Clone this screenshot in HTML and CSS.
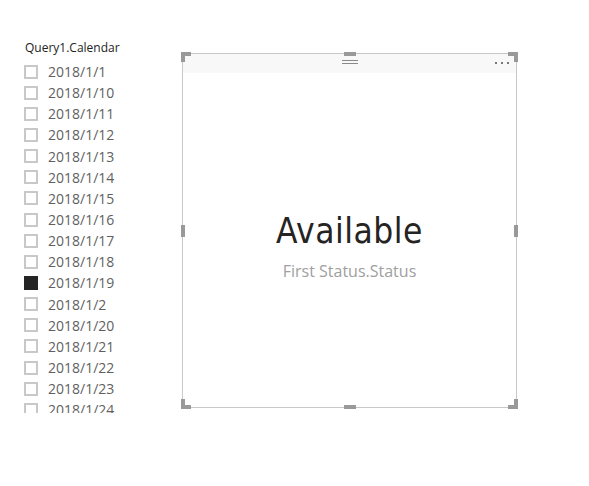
FILE: index.html
```html
<!DOCTYPE html>
<html>
<head>
<meta charset="utf-8">
<link rel="stylesheet" href="styles.css">
</head>
<body>
<div class="canvas">
  <div class="slicer">
    <div class="slicer-title">Query1.Calendar</div>
    <ul class="items">
      <li><span class="box"></span>2018/1/1</li>
      <li><span class="box"></span>2018/1/10</li>
      <li><span class="box"></span>2018/1/11</li>
      <li><span class="box"></span>2018/1/12</li>
      <li><span class="box"></span>2018/1/13</li>
      <li><span class="box"></span>2018/1/14</li>
      <li><span class="box"></span>2018/1/15</li>
      <li><span class="box"></span>2018/1/16</li>
      <li><span class="box"></span>2018/1/17</li>
      <li><span class="box"></span>2018/1/18</li>
      <li><span class="box checked"></span>2018/1/19</li>
      <li><span class="box"></span>2018/1/2</li>
      <li><span class="box"></span>2018/1/20</li>
      <li><span class="box"></span>2018/1/21</li>
      <li><span class="box"></span>2018/1/22</li>
      <li><span class="box"></span>2018/1/23</li>
      <li><span class="box"></span>2018/1/24</li>
    </ul>
  </div>
  <div class="card">
    <div class="card-head">
      <span class="grip"><i></i><i></i></span>
      <span class="more"><i></i><i></i><i></i></span>
    </div>
    <div class="card-body">
      <div class="value">Available</div>
      <div class="label">First Status.Status</div>
    </div>
    <span class="h tl"></span>
    <span class="h tr"></span>
    <span class="h bl"></span>
    <span class="h br"></span>
    <span class="m top"></span>
    <span class="m bottom"></span>
    <span class="m left"></span>
    <span class="m right"></span>
  </div>
</div>
</body>
</html>
```
FILE: styles.css
```css
html, body {
  margin: 0;
  padding: 0;
  background: #ffffff;
}
body {
  width: 589px;
  height: 486px;
  overflow: hidden;
  font-family: "Open Sans", "Liberation Sans", sans-serif;
}
.canvas {
  display: flex;
  align-items: flex-start;
  padding: 0 0 0 24px;
}
.slicer {
  width: 158px;
  padding-top: 39px;
  height: 374px;
  overflow: hidden;
  flex: none;
}
.slicer-title {
  font-size: 12px;
  line-height: 18px;
  color: #222222;
  margin-bottom: 4px;
  padding-left: 1px;
}
.items {
  list-style: none;
  margin: 0;
  padding: 0;
}
.items li {
  display: flex;
  align-items: center;
  height: 21.15px;
  font-size: 14px;
  color: #5f5f5f;
}
.box {
  width: 10px;
  height: 10px;
  border: 2px solid #c8c8c8;
  margin-right: 10px;
  flex: none;
}
.box.checked {
  background: #252525;
  border-color: #252525;
}
.card {
  position: relative;
  margin-top: 53px;
  width: 333px;
  height: 353px;
  border: 1px solid #c8c8c8;
  flex: none;
}
.card-head {
  height: 19px;
  background: #f8f8f8;
  position: relative;
}
.grip {
  position: absolute;
  left: 159px;
  top: 6px;
  width: 16px;
}
.grip i {
  display: block;
  height: 1px;
  background: #8a8a8a;
  margin-bottom: 2px;
}
.more {
  position: absolute;
  right: 7px;
  top: 8px;
  display: flex;
  gap: 4px;
}
.more i {
  width: 2px;
  height: 2px;
  background: #777777;
}
.card-body {
  display: flex;
  flex-direction: column;
  align-items: center;
  padding-top: 135px;
}
.value {
  font-family: "DejaVu Sans Condensed", "DejaVu Sans", sans-serif;
  font-size: 35px;
  line-height: 46px;
  color: #252423;
  letter-spacing: 0.5px;
}
.label {
  font-size: 16px;
  line-height: 22px;
  color: #a0a0a0;
  margin-top: 6px;
}
.h {
  position: absolute;
  width: 6px;
  height: 6px;
}
.h.tl { left: -2px; top: -2px; border-left: 4px solid #999; border-top: 4px solid #999; }
.h.tr { right: -2px; top: -2px; border-right: 4px solid #999; border-top: 4px solid #999; }
.h.bl { left: -2px; bottom: -2px; border-left: 4px solid #999; border-bottom: 4px solid #999; }
.h.br { right: -2px; bottom: -2px; border-right: 4px solid #999; border-bottom: 4px solid #999; }
.m {
  position: absolute;
  background: #999999;
}
.m.top { top: -2px; left: 161px; width: 12px; height: 4px; }
.m.bottom { bottom: -2px; left: 161px; width: 12px; height: 4px; }
.m.left { left: -2px; top: 171px; width: 4px; height: 12px; }
.m.right { right: -2px; top: 171px; width: 4px; height: 12px; }
```
